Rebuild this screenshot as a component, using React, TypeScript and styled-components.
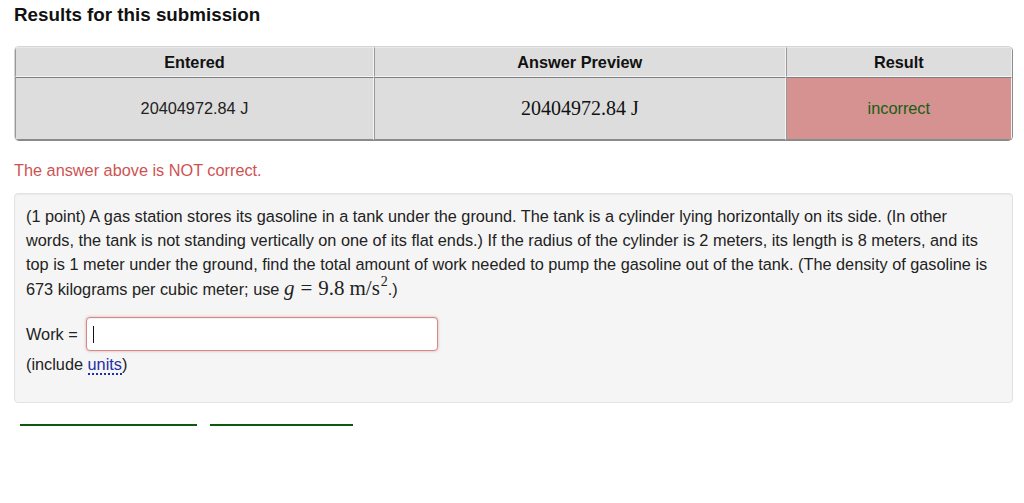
import styled, { createGlobalStyle } from "styled-components";

const GlobalStyle = createGlobalStyle`
  html, body {
    margin: 0;
    padding: 0;
    background: #fff;
  }
  body {
    font-family: "Liberation Sans", Arial, sans-serif;
    font-size: 16.3px;
    color: #222;
  }
`;

const Page = styled.div`
  padding: 4px 11px 0 14px;
`;

const Heading = styled.h3`
  margin: 0;
  font-size: 18.8px;
  font-weight: bold;
  line-height: 22px;
  color: #111;
`;

const ResultsTable = styled.table`
  margin-top: 20px;
  width: 100%;
  border-spacing: 0;
  border: 1px solid;
  border-color: #d4d4d4 #8a8a8a #8a8a8a #d4d4d4;
  border-radius: 5px;
  overflow: hidden;
`;

const HeadCell = styled.th<{ w: number }>`
  width: ${(p) => p.w}px;
  height: 28px;
  padding: 0;
  background: #dddddd;
  border: 1px solid;
  border-color: #e9e9e9 #f4f4f4 #f6f6f6 #999;
  font-weight: bold;
  font-size: 16.3px;
  color: #111;
  text-align: center;
`;

const DataCell = styled.td<{ bad?: boolean }>`
  height: 61px;
  padding: 0;
  background: ${(p) => (p.bad ? "#d69191" : "#dddddd")};
  border: 1px solid;
  border-color: #7e7e7e #f4f4f4 #8a8a8a #999;
  text-align: center;
  font-size: 16.3px;
  color: ${(p) => (p.bad ? "#165e16" : "#222")};
`;

const MathValue = styled.span`
  font-family: "Liberation Serif", "Times New Roman", serif;
  font-size: 20px;
  color: #111;
`;

const Notice = styled.div`
  margin-top: 17px;
  line-height: 24px;
  color: #cd5353;
`;

const ProblemWell = styled.div`
  margin-top: 11px;
  background: #f5f5f5;
  border: 1px solid #e3e3e3;
  border-radius: 4px;
  box-shadow: inset 0 1px 1px rgba(0, 0, 0, 0.05);
  padding: 10px 11px 26px 11px;
  line-height: 24px;
  color: #222;
`;

const Statement = styled.p`
  margin: 0;
  white-space: nowrap;
`;

const MathItalic = styled.span`
  font-family: "Liberation Serif", "Times New Roman", serif;
  font-style: italic;
  font-size: 21px;
`;

const MathRoman = styled.span<{ gap?: number }>`
  font-family: "Liberation Serif", "Times New Roman", serif;
  font-size: 21px;
  margin-left: ${(p) => p.gap ?? 0}px;
`;

const Sup = styled.sup`
  font-family: "Liberation Serif", "Times New Roman", serif;
  font-size: 14px;
  line-height: 0;
  vertical-align: 9px;
  margin-left: 1px;
`;

const AnswerRow = styled.div`
  margin-top: 16px;
  display: flex;
  align-items: center;
  gap: 8px;
`;

const AnswerInput = styled.div`
  width: 344px;
  height: 32px;
  box-sizing: content-box;
  background: #fff;
  border: 1px solid #d38a8a;
  border-radius: 4px;
  box-shadow: 0 0 3px rgba(200, 80, 80, 0.45), inset 0 1px 1px rgba(0, 0, 0, 0.06);
  display: flex;
  align-items: center;
  padding-left: 6px;
`;

const Caret = styled.div`
  width: 1px;
  height: 17px;
  background: #111;
`;

const Hint = styled.div`
  margin-top: 1px;
`;

const UnitsLink = styled.span`
  color: #1d2fa3;
  border-bottom: 2px dotted #1d2fa3;
`;

const ButtonRow = styled.div`
  margin-top: 21px;
  display: flex;
  gap: 13px;
  padding-left: 6px;
`;

const GreenRule = styled.div<{ w: number }>`
  width: ${(p) => p.w}px;
  height: 2px;
  background: #0b5a0b;
`;

export default function App() {
  return (
    <>
      <GlobalStyle />
      <Page>
        <Heading>Results for this submission</Heading>
        <ResultsTable>
          <thead>
            <tr>
              <HeadCell w={358}>Entered</HeadCell>
              <HeadCell w={411}>Answer Preview</HeadCell>
              <HeadCell w={225}>Result</HeadCell>
            </tr>
          </thead>
          <tbody>
            <tr>
              <DataCell>20404972.84 J</DataCell>
              <DataCell>
                <MathValue>20404972.84 J</MathValue>
              </DataCell>
              <DataCell bad>incorrect</DataCell>
            </tr>
          </tbody>
        </ResultsTable>
        <Notice>The answer above is NOT correct.</Notice>
        <ProblemWell>
          <Statement>
            (1 point) A gas station stores its gasoline in a tank under the ground. The tank is a
            cylinder lying horizontally on its side. (In other
            <br />
            words, the tank is not standing vertically on one of its flat ends.) If the radius of
            the cylinder is 2 meters, its length is 8 meters, and its
            <br />
            top is 1 meter under the ground, find the total amount of work needed to pump the
            gasoline out of the tank. (The density of gasoline is
            <br />
            673 kilograms per cubic meter; use <MathItalic>g</MathItalic>
            <MathRoman gap={6}>=</MathRoman>
            <MathRoman gap={6}>9.8</MathRoman>
            <MathRoman gap={5}>m/s</MathRoman>
            <Sup>2</Sup>.)
          </Statement>
          <AnswerRow>
            <span>Work =</span>
            <AnswerInput>
              <Caret />
            </AnswerInput>
          </AnswerRow>
          <Hint>
            (include <UnitsLink>units</UnitsLink>)
          </Hint>
        </ProblemWell>
        <ButtonRow>
          <GreenRule w={177} />
          <GreenRule w={143} />
        </ButtonRow>
      </Page>
    </>
  );
}
